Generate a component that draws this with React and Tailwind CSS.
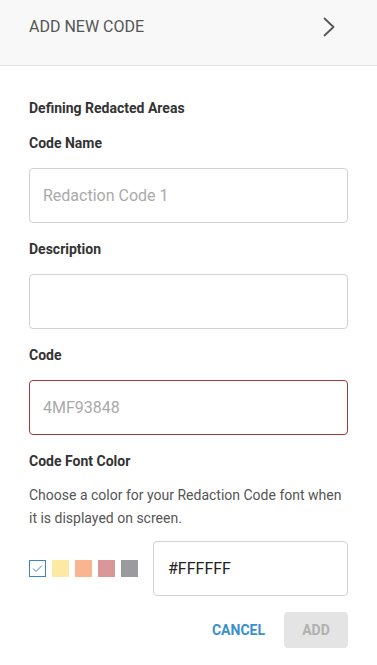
import { useState } from 'react';

const swatches = ['#fde9a3', '#f8b58f', '#d9979a', '#9b9b9d'];

export default function App() {
  const [color, setColor] = useState('#FFFFFF');

  return (
    <div className="min-h-[665px] bg-white" style={{ fontFamily: 'Roboto, "Liberation Sans", sans-serif' }}>
      <div className="flex h-[66px] items-center justify-between border-b border-[#e2e2e2] bg-[#f8f8f8] pb-[12px] pl-[29px] pr-[42px]">
        <span className="text-[16px] text-[#555]">ADD NEW CODE</span>
        <svg width="12" height="20" viewBox="0 0 12 20" fill="none">
          <path d="M1.5 1.5l9 8.5-9 8.5" stroke="#555" strokeWidth="1.8" strokeLinecap="round" strokeLinejoin="round" />
        </svg>
      </div>

      <div className="px-[29px] pt-[32px]">
        <div className="text-[14px] leading-[20px] font-bold text-[#333]">Defining Redacted Areas</div>

        <label className="mt-[15px] block text-[14px] leading-[20px] font-bold text-[#333]">Code Name</label>
        <input
          className="mt-[15px] h-[55px] w-full rounded border border-[#d2d2d2] px-[13px] text-[16px] text-[#333] placeholder:text-[#aaa] outline-none"
          placeholder="Redaction Code 1"
        />

        <label className="mt-[16px] block text-[14px] leading-[20px] font-bold text-[#333]">Description</label>
        <input className="mt-[15px] h-[55px] w-full rounded border border-[#d2d2d2] px-[13px] text-[16px] text-[#333] outline-none" />

        <label className="mt-[16px] block text-[14px] leading-[20px] font-bold text-[#333]">Code</label>
        <input
          className="mt-[15px] h-[55px] w-full rounded border border-[#a5383d] px-[13px] text-[16px] text-[#333] placeholder:text-[#aaa] outline-none"
          placeholder="4MF93848"
        />

        <label className="mt-[16px] block text-[14px] leading-[20px] font-bold text-[#333]">Code Font Color</label>
        <p className="mt-[13px] text-[14px] leading-[23px] text-[#555]">
          Choose a color for your Redaction Code font when it is displayed on screen.
        </p>

        <div className="mt-[11px] flex items-center">
          <div className="flex items-center gap-[6px]">
            <div className="flex h-[17px] w-[17px] items-center justify-center border border-[#3a87c7] bg-white">
              <svg width="11" height="9" viewBox="0 0 11 9" fill="none">
                <path d="M1 4.5l3 3 6-6" stroke="#3a87c7" strokeWidth="1" />
              </svg>
            </div>
            {swatches.map(c => (
              <div key={c} className="h-[17px] w-[17px]" style={{ backgroundColor: c }} />
            ))}
          </div>
          <input
            className="ml-auto h-[55px] w-[195px] rounded border border-[#d2d2d2] px-[14px] text-[16px] text-[#222] outline-none"
            value={color}
            onChange={e => setColor(e.target.value)}
          />
        </div>

        <div className="mt-[16px] flex items-center justify-end gap-[19px]">
          <button className="text-[14px] font-bold text-[#3a8fd0]">CANCEL</button>
          <button className="h-[36px] w-[64px] rounded bg-[#e4e4e4] text-[14px] font-bold text-[#b0b0b0]">ADD</button>
        </div>
      </div>
    </div>
  );
}
